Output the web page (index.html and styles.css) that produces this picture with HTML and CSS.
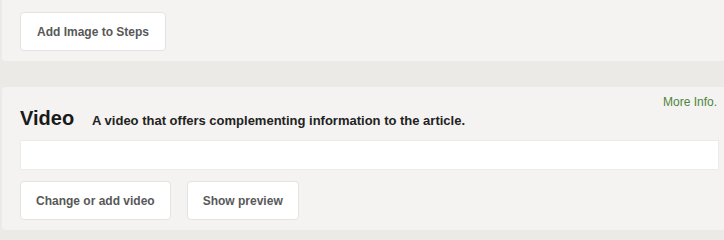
FILE: index.html
```html
<!DOCTYPE html>
<html lang="en">
<head>
    <meta charset="UTF-8">
    <title>Edit article</title>
    <link rel="stylesheet" href="styles.css">
</head>
<body>
    <!-- steps images -->
    <div class="section section-top">
        <button class="btn">Add Image to Steps</button>
    </div>

    <!-- video -->
    <div class="section section-video">
        <a class="more-info" href="#">More Info.</a>
        <div class="section-head">
            <h2>Video</h2>
            <p>A video that offers complementing information to the article.</p>
        </div>
        <input class="video-input" type="text">
        <div class="actions">
            <button class="btn">Change or add video</button>
            <button class="btn">Show preview</button>
        </div>
    </div>
</body>
</html>
```

FILE: styles.css
```css
body {
    margin: 0;
    background: #ebeae7;
    font-family: "Liberation Sans", Arial, sans-serif;
    overflow: hidden;
}

.section {
    background: #f4f3f1;
    margin-left: 2px;
    margin-right: -10px;
    padding: 0 15px 0 18px;
    border-radius: 4px;
}

.section-top {
    padding-top: 12px;
    padding-bottom: 10px;
    border-radius: 0 0 4px 4px;
}

.section-video {
    position: relative;
    margin-top: 26px;
    padding-top: 20px;
    padding-bottom: 10px;
}

.btn {
    height: 39px;
    padding: 0 16px;
    background: #fff;
    border: 1px solid #e4e3e0;
    border-radius: 4px;
    font-family: inherit;
    font-size: 12px;
    font-weight: bold;
    color: #585858;
    cursor: pointer;
}

.more-info {
    position: absolute;
    top: 8px;
    right: 17px;
    font-size: 12px;
    color: #4f8440;
    text-decoration: none;
}

.section-head {
    display: flex;
    align-items: baseline;
}

    .section-head h2 {
        margin: 0;
        font-size: 20px;
        font-weight: bold;
        color: #1a1a1a;
    }

    .section-head p {
        margin: 0 0 0 18px;
        font-size: 13px;
        font-weight: bold;
        color: #222;
    }

.video-input {
    display: block;
    box-sizing: border-box;
    width: 100%;
    height: 30px;
    margin-top: 10px;
    background: #fff;
    border: 1px solid #ecebe8;
    outline: none;
}

.actions {
    display: flex;
    gap: 16px;
    margin-top: 11px;
}

    .actions .btn {
        padding: 0 15px;
    }
```
